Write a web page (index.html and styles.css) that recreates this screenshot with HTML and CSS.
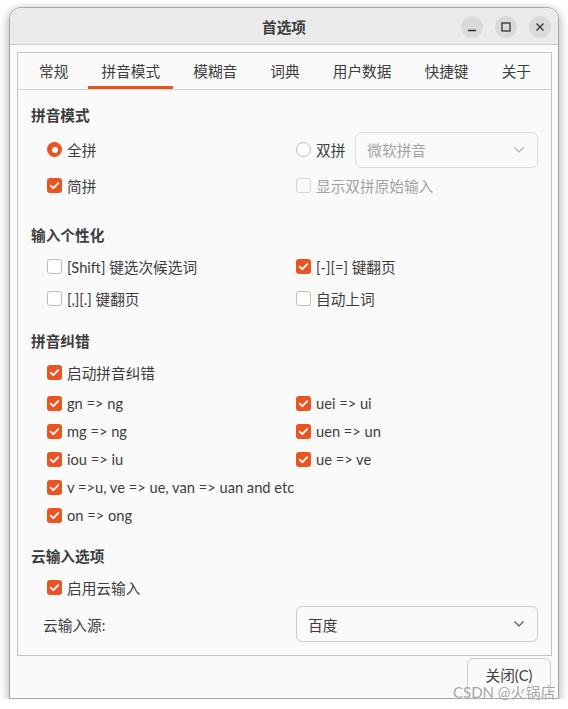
FILE: index.html
```html
<!DOCTYPE html>
<html lang="zh-CN">
<head>
  <meta charset="UTF-8" />
  <meta name="viewport" content="width=device-width, initial-scale=1.0"/>
  <title>首选项</title>
  <link rel="stylesheet" href="styles.css">
</head>
<body>
  <div class="window">
    <header class="titlebar">
      <span></span>
      <span class="title">首选项</span>
      <div class="wm-buttons">
        <span class="wm-btn"><svg width="12" height="12" viewBox="0 0 12 12"><path d="M2 9.5h8" /></svg></span>
        <span class="wm-btn"><svg width="12" height="12" viewBox="0 0 12 12"><rect x="2" y="2" width="8" height="8" /></svg></span>
        <span class="wm-btn"><svg width="12" height="12" viewBox="0 0 12 12"><path d="M2.5 2.5l7 7M9.5 2.5l-7 7" /></svg></span>
      </div>
    </header>

    <div class="window-body">
      <div class="notebook">
        <nav class="tabs">
          <span class="tab">常规</span>
          <span class="tab active">拼音模式</span>
          <span class="tab">模糊音</span>
          <span class="tab">词典</span>
          <span class="tab">用户数据</span>
          <span class="tab">快捷键</span>
          <span class="tab">关于</span>
        </nav>

        <div class="page">
          <!-- 拼音模式 -->
          <section class="group group-mode">
            <h3 class="group-title">拼音模式</h3>
            <div class="options mode-rows">
              <label class="opt"><span class="radio on"></span>全拼</label>
              <div class="opt">
                <span class="radio"></span>双拼
                <div class="combo disabled">
                  <span>微软拼音</span>
                  <svg class="chevron" width="10" height="6" viewBox="0 0 10 6"><path d="M0.5 0.5l4.5 4.5 4.5-4.5" /></svg>
                </div>
              </div>
              <label class="opt"><span class="box on"><svg viewBox="0 0 16 16"><path d="M4 8.2l2.8 2.7L12 5.4" /></svg></span>简拼</label>
              <label class="opt muted"><span class="box"></span>显示双拼原始输入</label>
            </div>
          </section>

          <!-- 输入个性化 -->
          <section class="group">
            <h3 class="group-title">输入个性化</h3>
            <div class="options">
              <label class="opt"><span class="box"></span>[Shift] 键选次候选词</label>
              <label class="opt"><span class="box on"><svg viewBox="0 0 16 16"><path d="M4 8.2l2.8 2.7L12 5.4" /></svg></span>[-][=] 键翻页</label>
              <label class="opt"><span class="box"></span>[,][.] 键翻页</label>
              <label class="opt"><span class="box"></span>自动上词</label>
            </div>
          </section>

          <!-- 拼音纠错 -->
          <section class="group">
            <h3 class="group-title">拼音纠错</h3>
            <div class="options fix-rows">
              <label class="opt wide"><span class="box on"><svg viewBox="0 0 16 16"><path d="M4 8.2l2.8 2.7L12 5.4" /></svg></span>启动拼音纠错</label>
              <label class="opt"><span class="box on"><svg viewBox="0 0 16 16"><path d="M4 8.2l2.8 2.7L12 5.4" /></svg></span>gn =&gt; ng</label>
              <label class="opt"><span class="box on"><svg viewBox="0 0 16 16"><path d="M4 8.2l2.8 2.7L12 5.4" /></svg></span>uei =&gt; ui</label>
              <label class="opt"><span class="box on"><svg viewBox="0 0 16 16"><path d="M4 8.2l2.8 2.7L12 5.4" /></svg></span>mg =&gt; ng</label>
              <label class="opt"><span class="box on"><svg viewBox="0 0 16 16"><path d="M4 8.2l2.8 2.7L12 5.4" /></svg></span>uen =&gt; un</label>
              <label class="opt"><span class="box on"><svg viewBox="0 0 16 16"><path d="M4 8.2l2.8 2.7L12 5.4" /></svg></span>iou =&gt; iu</label>
              <label class="opt"><span class="box on"><svg viewBox="0 0 16 16"><path d="M4 8.2l2.8 2.7L12 5.4" /></svg></span>ue =&gt; ve</label>
              <label class="opt wide"><span class="box on"><svg viewBox="0 0 16 16"><path d="M4 8.2l2.8 2.7L12 5.4" /></svg></span>v =&gt;u, ve =&gt; ue, van =&gt; uan and etc</label>
              <label class="opt"><span class="box on"><svg viewBox="0 0 16 16"><path d="M4 8.2l2.8 2.7L12 5.4" /></svg></span>on =&gt; ong</label>
            </div>
          </section>

          <!-- 云输入选项 -->
          <section class="group">
            <h3 class="group-title">云输入选项</h3>
            <div class="options">
              <label class="opt wide"><span class="box on"><svg viewBox="0 0 16 16"><path d="M4 8.2l2.8 2.7L12 5.4" /></svg></span>启用云输入</label>
            </div>
            <div class="source-row">
              <span>云输入源:</span>
              <div class="combo">
                <span>百度</span>
                <svg class="chevron" width="10" height="6" viewBox="0 0 10 6"><path d="M0.5 0.5l4.5 4.5 4.5-4.5" /></svg>
              </div>
            </div>
          </section>
        </div>
      </div>

      <div class="actions">
        <button class="btn">关闭(C)</button>
      </div>
    </div>
  </div>

  <div class="watermark">CSDN @火锅店</div>
</body>
</html>
```

FILE: styles.css
```css
body {
  margin: 0;
  padding: 7px 0 0 9px;
  background: #ffffff;
  font-family: "Lato", "Noto Sans CJK SC", sans-serif;
  font-size: 14.67px;
  color: #3d3d3d;
}

.window {
  width: 550px;
  height: 692px;
  box-sizing: border-box;
  border: 1px solid #a6a6a6;
  border-radius: 12px 12px 0 0;
  background: #fafafa;
  overflow: hidden;
  box-shadow: 0 3px 10px 1px rgba(0, 0, 0, 0.3);
  display: flex;
  flex-direction: column;
}

/* title bar */
.titlebar {
  height: 36px;
  flex: none;
  background: #ebebeb;
  border-bottom: 1px solid #cdcdcd;
  display: grid;
  grid-template-columns: 1fr auto 1fr;
  align-items: center;
}

.title {
  font-weight: bold;
  line-height: 36px;
  padding-top: 2px;
}

.wm-buttons {
  display: flex;
  justify-content: flex-end;
  gap: 12px;
  padding-right: 7px;
}

.wm-btn {
  width: 22px;
  height: 22px;
  border-radius: 50%;
  background: #dadada;
  display: flex;
  align-items: center;
  justify-content: center;
}

.wm-btn svg {
  fill: none;
  stroke: #333;
  stroke-width: 1.3;
}

/* body */
.window-body {
  padding: 7px 6px 0 7px;
}

.notebook {
  height: 604px;
  box-sizing: border-box;
  border: 1px solid #c4c4c4;
  background: #fafafa;
  display: flex;
  flex-direction: column;
}

.tabs {
  height: 36px;
  display: flex;
  justify-content: space-between;
  padding: 0 7px 0 8px;
  border-bottom: 1px solid #d2d2d2;
}

.tab {
  padding: 1px 13px 0 13px;
  line-height: 35px;
  height: 36px;
  box-sizing: border-box;
}

.tab.active {
  box-shadow: inset 0 -3px 0 #e95420;
}

.page {
  padding: 15px 13px 0 13px;
}

.group {
  margin-bottom: 19px;
}

.group-mode {
  margin-bottom: 26px;
}

.group-title {
  margin: 0 0 5px 0;
  font-size: inherit;
  font-weight: bold;
  line-height: 22px;
}

.options {
  display: grid;
  grid-template-columns: 249px 1fr;
  grid-auto-rows: 28px;
  row-gap: 4px;
  padding-left: 16px;
}

.mode-rows {
  grid-template-rows: 35px 28px;
  row-gap: 4px;
}

.fix-rows {
  grid-template-rows: 29px;
  grid-auto-rows: 24px;
}

.opt {
  display: flex;
  align-items: center;
  gap: 5px;
  white-space: nowrap;
}

.opt.wide {
  grid-column: 1 / -1;
}

.opt.muted {
  color: #a3a3a3;
}

/* check boxes and radios */
.box,
.radio {
  width: 15px;
  height: 15px;
  flex: none;
  box-sizing: border-box;
  border: 1px solid #bdbdbd;
  background: #ffffff;
  display: flex;
  align-items: center;
  justify-content: center;
}

.box {
  border-radius: 3px;
}

.muted .box {
  border-color: #d6d6d6;
  background: #fafafa;
}

.box.on {
  border: none;
  background: #e95420;
}

.box svg {
  width: 15px;
  height: 15px;
  fill: none;
  stroke: #ffffff;
  stroke-width: 2;
  stroke-linecap: round;
  stroke-linejoin: round;
}

.radio {
  border-radius: 50%;
}

.radio.on {
  border: none;
  background: #e95420;
}

.radio.on::after {
  content: "";
  width: 6px;
  height: 6px;
  border-radius: 50%;
  background: #ffffff;
}

/* combo boxes */
.combo {
  flex: 1;
  height: 36px;
  box-sizing: border-box;
  margin-left: 5px;
  padding: 0 13px 0 11px;
  border: 1px solid #cdcdcd;
  border-radius: 6px;
  background: #fafafa;
  display: flex;
  align-items: center;
  justify-content: space-between;
}

.combo.disabled {
  color: #a3a3a3;
  border-color: #dcdcdc;
}

.chevron {
  fill: none;
  stroke: #555;
  stroke-width: 1.2;
}

.disabled .chevron {
  stroke: #b0b0b0;
}

.source-row {
  display: grid;
  grid-template-columns: 253px 1fr;
  align-items: center;
  height: 36px;
  margin-top: 5px;
  padding-left: 12px;
}

.source-row .combo {
  margin-left: 0;
}

/* dialog buttons */
.actions {
  display: flex;
  justify-content: flex-end;
  padding-top: 2px;
  padding-right: 1px;
}

.btn {
  width: 84px;
  height: 42px;
  border: 1px solid #cdcdcd;
  border-radius: 6px;
  background: #fafafa;
  font: inherit;
  color: #3d3d3d;
  padding: 0 0 10px 0;
}

.watermark {
  position: absolute;
  left: 453px;
  top: 681px;
  font-size: 15px;
  color: rgba(150, 150, 150, 0.85);
  text-shadow: 0 0 2px rgba(255, 255, 255, 0.8);
}
```
